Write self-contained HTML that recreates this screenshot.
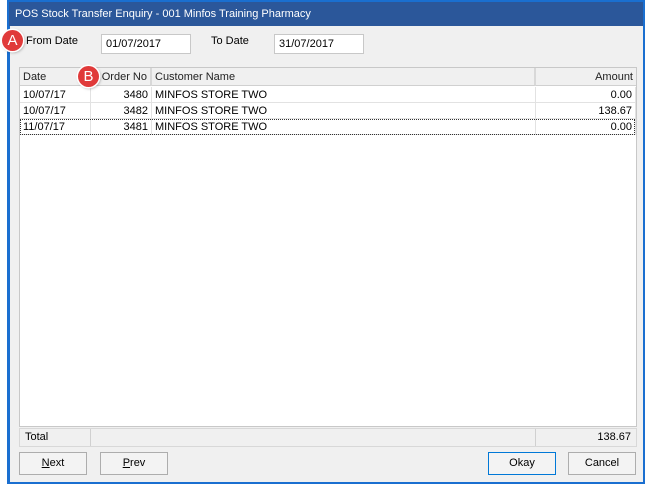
<!DOCTYPE html><html><head><style>
body{margin:0;width:647px;height:486px;background:#fff;font-family:"Liberation Sans",sans-serif;font-size:11px;position:relative;overflow:hidden;color:#000}
.a{position:absolute}
.win{left:7px;top:0;width:638px;height:484px;background:#1a6fd0}
.tb{left:9px;top:2px;width:634px;height:24px;background:#2b579a;color:#fff;font-size:11px;line-height:24px;padding-left:6px;box-sizing:border-box}
.cl{left:10px;top:26px;width:633px;height:456px;background:#f0f0f0}
.in{background:#fff;border:1px solid #c8c8c8;box-sizing:border-box;height:20px;line-height:18px;padding-left:4px}
.badge{width:21px;height:21px;border-radius:50%;background:#e03a3a;color:#fff;font-size:15px;text-align:center;line-height:21px;box-shadow:0 0 0 1.5px #fff,1px 1px 3px rgba(0,0,0,.5)}
.list{left:19px;top:67px;width:618px;height:360px;background:#fff;border:1px solid #c8c8c8;box-sizing:border-box}
.c{position:absolute;white-space:nowrap;line-height:16px;box-sizing:border-box;padding:0 3px}
.h{background:#f0f0f0;top:0;height:18px;line-height:18px;border-right:2px solid #d8d8d8;border-bottom:1px solid #d0d0d0;color:#222}
.r{border-bottom:1px solid #e2e2e2;border-right:1px solid #e2e2e2;height:16px}
.btn{background:#f3f3f3;border:1px solid #adadad;box-sizing:border-box;height:23px;line-height:21px;text-align:center;font-size:11px}
</style></head><body>
<div class="a win"></div>
<div class="a tb">POS Stock Transfer Enquiry - 001 Minfos Training Pharmacy</div>
<div class="a cl"></div>
<div class="a" style="left:26px;top:35px">From Date</div>
<div class="a in" style="left:101px;top:34px;width:90px">01/07/2017</div>
<div class="a" style="left:211px;top:35px">To Date</div>
<div class="a in" style="left:274px;top:34px;width:90px">31/07/2017</div>
<div class="a list">
<div class="c h" style="left:0;width:71px">Date</div>
<div class="c h" style="left:71px;width:61px;text-align:right">Order No</div>
<div class="c h" style="left:132px;width:384px">Customer Name</div>
<div class="c h" style="left:516px;width:100px;text-align:right;border-right:none">Amount</div>
<div class="c r" style="left:0;top:19px;width:71px">10/07/17</div><div class="c r" style="left:71px;top:19px;width:61px;text-align:right">3480</div><div class="c r" style="left:132px;top:19px;width:384px">MINFOS STORE TWO</div><div class="c r" style="left:516px;top:19px;width:100px;text-align:right">0.00</div>
<div class="c r" style="left:0;top:35px;width:71px">10/07/17</div><div class="c r" style="left:71px;top:35px;width:61px;text-align:right">3482</div><div class="c r" style="left:132px;top:35px;width:384px">MINFOS STORE TWO</div><div class="c r" style="left:516px;top:35px;width:100px;text-align:right">138.67</div>
<div class="c r" style="left:0;top:51px;width:71px">11/07/17</div><div class="c r" style="left:71px;top:51px;width:61px;text-align:right">3481</div><div class="c r" style="left:132px;top:51px;width:384px">MINFOS STORE TWO</div><div class="c r" style="left:516px;top:51px;width:100px;text-align:right">0.00</div>
<div class="a" style="left:0;top:51px;width:615px;height:16px;border:1px dotted #333;box-sizing:border-box"></div>
</div>
<div class="a" style="left:19px;top:428px;width:618px;height:19px;border:1px solid #d8d8d8;box-sizing:border-box"></div>
<div class="a" style="left:20px;top:429px;width:71px;height:17px;border-right:1px solid #d0d0d0;line-height:17px;padding-left:5px;box-sizing:border-box">Total</div>
<div class="a" style="left:535px;top:429px;width:101px;height:17px;border-left:1px solid #d0d0d0;line-height:17px;text-align:right;padding-right:5px;box-sizing:border-box">138.67</div>
<div class="a btn" style="left:19px;top:452px;width:68px"><u>N</u>ext</div>
<div class="a btn" style="left:100px;top:452px;width:68px"><u>P</u>rev</div>
<div class="a btn" style="left:488px;top:452px;width:68px;border-color:#0078d7">Okay</div>
<div class="a btn" style="left:568px;top:452px;width:68px">Cancel</div>
<div class="a badge" style="left:2px;top:30px">A</div>
<div class="a badge" style="left:78px;top:66px">B</div>
</body></html>
